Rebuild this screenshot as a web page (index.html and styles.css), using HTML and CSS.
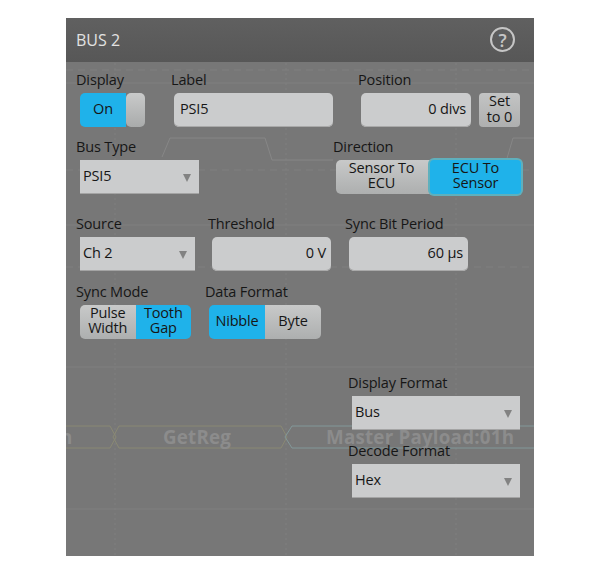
FILE: index.html
```html
<!DOCTYPE html>
<html lang="en">
<head>
    <meta charset="UTF-8">
    <meta name="viewport" content="width=device-width, initial-scale=1.0">
    <title>BUS 2</title>
    <link rel="stylesheet" href="styles.css">
</head>
<body>
    <div class="panel">
        <!-- scope trace showing through the menu -->
        <svg class="trace" width="468" height="538" viewBox="66 18 468 538">
            <g fill="none" stroke="#808080">
                <path d="M66 70H534" stroke-dasharray="7 5"/>
                <path d="M66 83H534"/>
                <path d="M66 170H534" stroke-dasharray="7 5"/>
                <path d="M66 225H534"/>
                <path d="M66 267H534" stroke-dasharray="7 5"/>
                <path d="M66 367H534"/>
                <path d="M66 509H534"/>
                <path d="M115 18V556M286 18V556M456 18V556" stroke-dasharray="2 3"/>
                <path d="M162 157L170 138H265L272 160H333M505 165L513 138H534" stroke="#878787"/>
                <path d="M66 426H110L116 437L110 448H66M113 437L119 426H281L287 437L281 448H119Z" stroke="#8a8974"/>
                <path d="M534 426H292L285 437L292 448H534" stroke="#83999a"/>
            </g>
            <text class="trace-text" x="60" y="444">h</text>
            <text class="trace-text" x="163" y="444">GetReg</text>
            <text class="trace-text" x="326" y="444">Master Payload:01h</text>
        </svg>

        <div class="header">
            <span class="title">BUS 2</span>
            <span class="help">?</span>
        </div>

        <div class="content">
            <div class="row row-1">
                <div class="field w-display">
                    <div class="label">Display</div>
                    <div class="toggle">
                        <div class="toggle-on">On</div>
                        <div class="toggle-knob"></div>
                    </div>
                </div>
                <div class="field w-label">
                    <div class="label label-in">Label</div>
                    <div class="input text-left">PSI5</div>
                </div>
                <div class="field w-position">
                    <div class="label label-in">Position</div>
                    <div class="input">0 divs</div>
                </div>
                <button class="set-zero">Set<br>to 0</button>
            </div>

            <div class="row row-2">
                <div class="field w-bustype">
                    <div class="label">Bus Type</div>
                    <div class="select">PSI5</div>
                </div>
                <div class="field w-direction">
                    <div class="label label-in label-tight">Direction</div>
                    <div class="seg">
                        <div class="seg-item off">Sensor To<br>ECU</div>
                        <div class="seg-item on focus">ECU To<br>Sensor</div>
                    </div>
                </div>
            </div>

            <div class="row row-3">
                <div class="field w-source">
                    <div class="label">Source</div>
                    <div class="select">Ch 2</div>
                </div>
                <div class="field w-threshold">
                    <div class="label">Threshold</div>
                    <div class="input">0 V</div>
                </div>
                <div class="field w-period">
                    <div class="label">Sync Bit Period</div>
                    <div class="input">60 µs</div>
                </div>
            </div>

            <div class="row row-4">
                <div class="field w-sync">
                    <div class="label">Sync Mode</div>
                    <div class="seg">
                        <div class="seg-item off">Pulse<br>Width</div>
                        <div class="seg-item on">Tooth<br>Gap</div>
                    </div>
                </div>
                <div class="field w-format">
                    <div class="label">Data Format</div>
                    <div class="seg">
                        <div class="seg-item on">Nibble</div>
                        <div class="seg-item off">Byte</div>
                    </div>
                </div>
            </div>

            <div class="row row-5">
                <div class="field w-decode">
                    <div class="label">Display Format</div>
                    <div class="select">Bus</div>
                </div>
            </div>

            <div class="row row-6">
                <div class="field w-decode">
                    <div class="label">Decode Format</div>
                    <div class="select">Hex</div>
                </div>
            </div>
        </div>
    </div>
</body>
</html>
```

FILE: styles.css
```css
body { margin: 0; background: #fff; font-family: "Open Sans", "Noto Sans", sans-serif; font-size: 14.5px; letter-spacing: -0.15px; color: #161616; }
.panel { position: relative; width: 468px; height: 538px; margin: 18px 0 0 66px; background: #777; overflow: hidden; }
.trace { position: absolute; top: 0; left: 0; }
.trace-text { font-family: "Open Sans", sans-serif; font-size: 18.8px; font-weight: 700; fill: #8c8c8c; letter-spacing: 0.2px; }

.header { position: relative; display: flex; align-items: center; justify-content: space-between; height: 44px; padding: 0 19px 1px 10px; box-sizing: border-box; background: linear-gradient(#606060, #575757); }
.title { font-size: 16px; letter-spacing: 0; color: #e2e2e2; }
.help { display: flex; align-items: center; justify-content: center; width: 21px; height: 21px; border: 2px solid #c6c6c6; border-radius: 50%; font-size: 18px; font-weight: 600; color: #c6c6c6; }

.content { position: relative; padding: 9px 0 0 10px; }
.row { display: flex; align-items: flex-start; }
.row-2 { margin-top: 11px; }
.row-3 { margin-top: 21px; }
.row-4 { margin-top: 12px; }
.row-5 { margin-top: 35px; padding-left: 272px; }
.row-6 { margin-top: 12px; padding-left: 272px; }

.field { flex: none; }
.label { height: 22px; line-height: 18px; white-space: nowrap; }
.label-in { margin-left: 1px; }
.label-tight { height: 21px; }
.input, .select, .toggle, .seg, .set-zero { margin-left: 4px; height: 34px; }

.w-display { width: 94px; }
.w-label { width: 187px; }
.w-position { width: 114px; margin-right: 4px; }
.w-position .input { width: 110px; }
.w-label .input { width: 159px; }
.w-bustype { width: 256px; }
.w-bustype .select { width: 119px; }
.w-direction { width: 190px; }
.w-source { width: 132px; }
.w-source .select { width: 115px; }
.w-threshold { width: 137px; }
.w-threshold .input { width: 119px; }
.w-period { width: 123px; }
.w-period .input { width: 119px; }
.w-sync { width: 129px; }
.w-sync .seg { width: 111px; }
.w-format { width: 116px; }
.w-format .seg { width: 112px; }
.w-decode { width: 172px; }
.w-decode .select { width: 168px; }

.input { display: flex; align-items: center; justify-content: flex-end; padding: 0 5px 3px; box-sizing: border-box; background: #cbcccd; border-radius: 5px; box-shadow: inset 0 -1px 0 #a9a9a9; }
.text-left { justify-content: flex-start; padding: 0 6px 3px; }

.select { position: relative; display: flex; align-items: center; padding: 0 0 3px 3px; box-sizing: border-box; background: #cbcccd; box-shadow: inset 0 -1px 0 #a4a4a4; }
.select::after { content: ""; position: absolute; right: 8px; top: 14px; border-left: 4.5px solid transparent; border-right: 4.5px solid transparent; border-top: 8px solid #828282; }

.toggle { display: flex; width: 65px; }
.toggle-on { display: flex; align-items: center; justify-content: center; width: 46px; padding-bottom: 3px; box-sizing: border-box; background: #1fb2ea; border-radius: 5px 0 0 5px; }
.toggle-knob { width: 19px; background: linear-gradient(#c9caca, #a9abab); border-radius: 5px; }

.set-zero { flex: none; align-self: flex-end; width: 41px; padding: 0 0 2px; border: none; border-radius: 4px; background: linear-gradient(#c3c4c4, #aeafaf); font-family: inherit; font-size: 14.5px; letter-spacing: inherit; line-height: 16px; color: #161616; }

.seg { display: flex; }
.seg-item { flex: 1; display: flex; align-items: center; justify-content: center; padding-bottom: 4px; box-sizing: border-box; text-align: center; line-height: 15px; }
.seg-item.off { background: linear-gradient(#c8c9c9, #adafaf); }
.seg-item.on { background: #1fb2ea; }
.seg-item:first-child { border-radius: 5px 0 0 5px; }
.seg-item:last-child { border-radius: 0 5px 5px 0; }
.w-direction .seg { width: 185px; margin-top: 1px; }
.w-direction .seg-item.off { padding-right: 3px; }
.seg-item.focus { box-shadow: 0 0 0 2px #5fb0bd; border-radius: 4px; }
```
